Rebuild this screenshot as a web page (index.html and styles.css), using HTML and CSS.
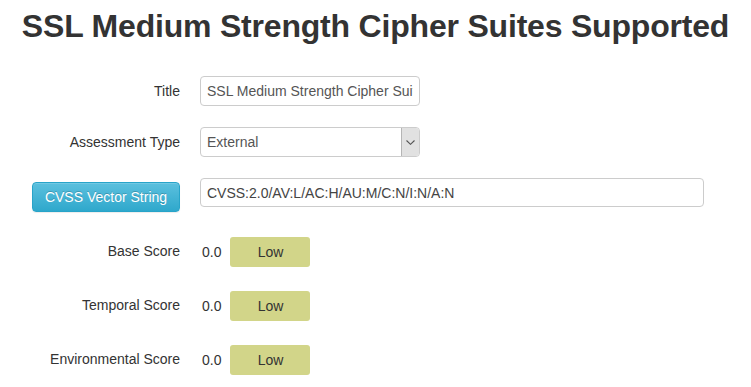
FILE: index.html
```html
<!DOCTYPE html>
<html>
<head>
<meta charset="utf-8">
<link rel="stylesheet" href="styles.css">
</head>
<body>
<h1 class="page-title">SSL Medium Strength Cipher Suites Supported</h1>
<form class="form">
  <div class="row row-title">
    <label class="label">Title</label>
    <input class="field field-short" type="text" value="SSL Medium Strength Cipher Suites Supported">
  </div>
  <div class="row row-select">
    <label class="label">Assessment Type</label>
    <div class="select">
      <span class="select-value">External</span>
      <span class="select-arrow"><svg width="9" height="5" viewBox="0 0 9 5"><path d="M0.5 0.5 L4.5 4.3 L8.5 0.5" fill="none" stroke="#555" stroke-width="1.1"/></svg></span>
    </div>
  </div>
  <div class="row row-cvss">
    <div class="label"><button type="button" class="btn-info">CVSS Vector String</button></div>
    <input class="field field-long" type="text" value="CVSS:2.0/AV:L/AC:H/AU:M/C:N/I:N/A:N">
  </div>
  <div class="row row-score">
    <label class="label label-score">Base Score</label>
    <div class="score"><span class="score-num">0.0</span><span class="badge-low">Low</span></div>
  </div>
  <div class="row row-score">
    <label class="label label-score">Temporal Score</label>
    <div class="score"><span class="score-num">0.0</span><span class="badge-low">Low</span></div>
  </div>
  <div class="row row-score">
    <label class="label label-score">Environmental Score</label>
    <div class="score"><span class="score-num">0.0</span><span class="badge-low">Low</span></div>
  </div>
</form>
</body>
</html>
```

FILE: styles.css
```css
* { box-sizing: border-box; }
html, body { margin: 0; padding: 0; background: #fff; }
body {
  font-family: "Liberation Sans", Arial, sans-serif;
  font-size: 14px;
  color: #333;
}
.page-title {
  margin: 0;
  padding-top: 8px;
  font-size: 32px;
  font-weight: bold;
  line-height: 36px;
  text-align: center;
  color: #333;
  letter-spacing: -0.2px;
}
.form {
  display: flex;
  flex-direction: column;
  padding-top: 32px;
}
.row {
  display: grid;
  grid-template-columns: 180px auto;
  column-gap: 20px;
  align-items: center;
}
.row-select { margin-top: 21px; }
.row-cvss { margin-top: 21px; align-items: start; }
.row-score { margin-top: 25px; }
.row-score + .row-score { margin-top: 24px; }
.label {
  text-align: right;
  line-height: 20px;
}
.label-score { position: relative; top: -1px; }
.field {
  height: 30px;
  border: 1px solid #ccc;
  border-radius: 4px;
  padding: 4px 6px;
  font-family: "Liberation Sans", Arial, sans-serif;
  font-size: 14px;
  color: #555;
  background: #fff;
  outline: none;
}
.field-short { width: 220px; }
.field-long { width: 504px; height: 29px; color: #444; }
.select {
  width: 220px;
  height: 30px;
  border: 1px solid #ccc;
  border-radius: 4px;
  display: flex;
  align-items: center;
  justify-content: space-between;
  background: #fff;
  overflow: hidden;
}
.select-value { padding-left: 6px; color: #555; }
.select-arrow {
  width: 18px;
  height: 100%;
  background: #e1e1e1;
  border-left: 1px solid #b5b5b5;
  display: flex;
  align-items: center;
  justify-content: center;
}
.select-arrow svg { display: block; }
.row-cvss .label { text-align: left; }
.btn-info {
  margin-top: 4px;
  width: 148px;
  height: 30px;
  margin-left: 32px;
  border: 1px solid #28a4c9;
  border-radius: 4px;
  background: linear-gradient(to bottom, #5bc0de 0%, #2fa8cc 100%);
  color: #fff;
  font-family: "Liberation Sans", Arial, sans-serif;
  font-size: 14px;
  padding: 0;
  box-shadow: inset 0 1px 0 rgba(255,255,255,.15), 0 1px 1px rgba(0,0,0,.075);
  text-shadow: 0 -1px 0 rgba(0,0,0,.2);
}
.score {
  display: flex;
  align-items: center;
  gap: 9px;
  margin-left: 2px;
}
.badge-low {
  width: 80px;
  height: 30px;
  border-radius: 3px;
  background: #d2d589;
  display: flex;
  align-items: center;
  justify-content: center;
  color: #333;
}
```
